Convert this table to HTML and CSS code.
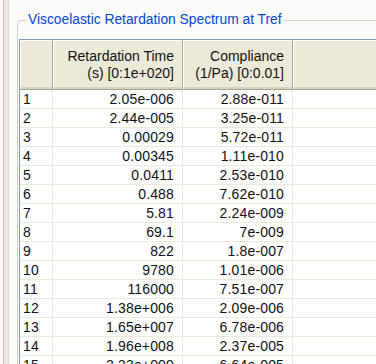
FILE: index.html
```html
<!DOCTYPE html>
<html>
<head>
<meta charset="utf-8">
<link rel="stylesheet" href="styles.css">
</head>
<body>
<div class="rail"></div>
<div class="main">
  <fieldset class="group">
    <legend class="group-title">Viscoelastic Retardation Spectrum at Tref</legend>
    <div class="grid">
      <table class="spectrum">
        <colgroup>
          <col class="c-num"><col class="c-time"><col class="c-comp"><col class="c-rest">
        </colgroup>
        <thead>
          <tr>
            <th></th>
            <th>Retardation Time<br>(s) [0:1e+020]</th>
            <th>Compliance<br>(1/Pa) [0:0.01]</th>
            <th></th>
          </tr>
        </thead>
        <tbody>
          <tr><td class="num">1</td><td>2.05e-006</td><td>2.88e-011</td><td></td></tr>
          <tr><td class="num">2</td><td>2.44e-005</td><td>3.25e-011</td><td></td></tr>
          <tr><td class="num">3</td><td>0.00029</td><td>5.72e-011</td><td></td></tr>
          <tr><td class="num">4</td><td>0.00345</td><td>1.11e-010</td><td></td></tr>
          <tr><td class="num">5</td><td>0.0411</td><td>2.53e-010</td><td></td></tr>
          <tr><td class="num">6</td><td>0.488</td><td>7.62e-010</td><td></td></tr>
          <tr><td class="num">7</td><td>5.81</td><td>2.24e-009</td><td></td></tr>
          <tr><td class="num">8</td><td>69.1</td><td>7e-009</td><td></td></tr>
          <tr><td class="num">9</td><td>822</td><td>1.8e-007</td><td></td></tr>
          <tr><td class="num">10</td><td>9780</td><td>1.01e-006</td><td></td></tr>
          <tr><td class="num">11</td><td>116000</td><td>7.51e-007</td><td></td></tr>
          <tr><td class="num">12</td><td>1.38e+006</td><td>2.09e-006</td><td></td></tr>
          <tr><td class="num">13</td><td>1.65e+007</td><td>6.78e-006</td><td></td></tr>
          <tr><td class="num">14</td><td>1.96e+008</td><td>2.37e-005</td><td></td></tr>
          <tr><td class="num">15</td><td>2.33e+009</td><td>6.64e-005</td><td></td></tr>
        </tbody>
      </table>
    </div>
  </fieldset>
</div>
</body>
</html>
```
FILE: styles.css
```css
html, body {
  margin: 0;
  padding: 0;
}
body {
  display: flex;
  width: 376px;
  height: 364px;
  overflow: hidden;
  background: #fbfbf9;
  font-family: "Liberation Sans", Arial, sans-serif;
  color: #000;
}
.rail {
  flex: none;
  width: 4px;
  margin-left: 3px;
  background: #ece9d8;
  border-left: 1px solid #cbc7b6;
  border-right: 1px solid #dedbcb;
}
.main {
  flex: none;
  padding-left: 8px;
}
.group {
  margin: 12px 0 0 0;
  padding: 11px 0 0 1px;
  width: 440px;
  height: 400px;
  border: 1px solid #d0d0bf;
  border-radius: 4px;
  box-sizing: border-box;
}
.group-title {
  margin-left: 7px;
  padding: 0 2px;
  font-size: 13.8px;
  line-height: 16px;
  color: #0046d5;
}
.grid {
  border: 1px solid #7f9db9;
  background: #fff;
}
.spectrum {
  border-collapse: separate;
  border-spacing: 0;
  table-layout: fixed;
  width: 420px;
  font-size: 14px;
  color: #111;
}
.c-num { width: 33px; }
.c-time { width: 130px; }
.c-comp { width: 110px; }
.c-rest { width: 147px; }
.spectrum th {
  box-sizing: border-box;
  height: 50px;
  padding: 0 8px 0 0;
  background: #ece9d8;
  border-right: 1px solid #aca899;
  border-bottom: 1px solid #a5a28f;
  box-shadow: inset 1px 1px #fff, inset 0 -2px #d6d2c2;
  font-weight: normal;
  text-align: right;
  line-height: 17px;
  vertical-align: middle;
}
.spectrum td {
  box-sizing: border-box;
  height: 19px;
  padding: 0 8px 0 0;
  border-right: 1px solid #ece9dc;
  border-bottom: 1px solid #ece9dc;
  text-align: right;
  line-height: 18px;
  letter-spacing: 0.15px;
  white-space: nowrap;
}
.spectrum td.num {
  text-align: left;
  padding: 0 0 0 3px;
}
```
